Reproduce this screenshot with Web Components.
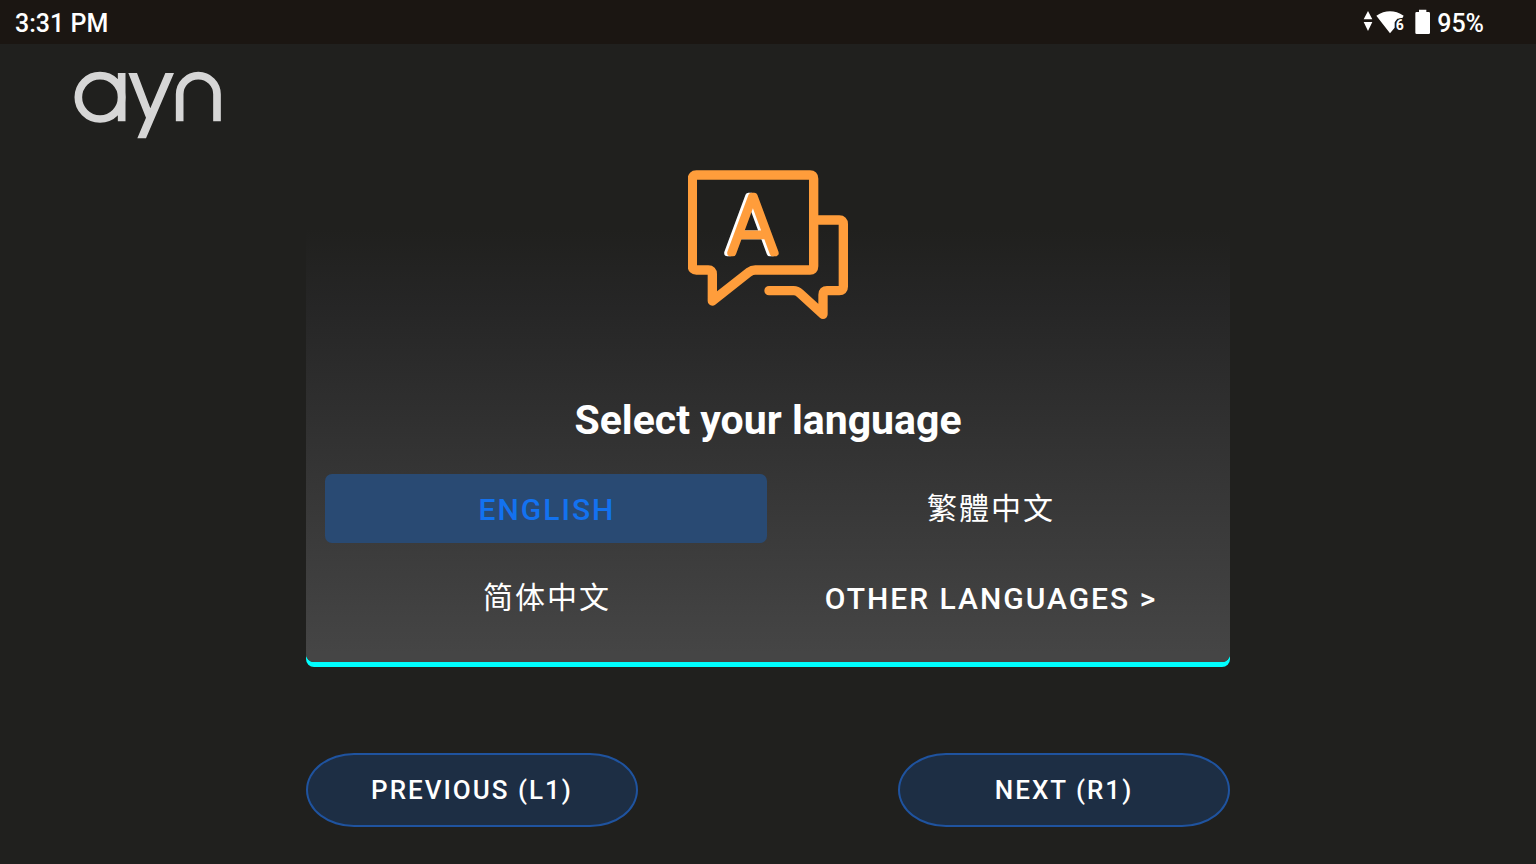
<!DOCTYPE html>
<html lang="en">
<head>
<meta charset="utf-8">
<meta name="viewport" content="width=device-width, initial-scale=1">
<title>Select your language</title>
<style>
  html { background: #20201e; }
  body { margin: 0; color: #fff; font-family: Roboto, "Noto Sans CJK SC", sans-serif; }
</style>
</head>
<body>
<setup-screen>
  <status-bar slot="status" time="3:31 PM" battery="95%"></status-bar>
  <brand-logo slot="brand"></brand-logo>
  <language-panel heading="Select your language">
    <language-option selected>ENGLISH</language-option>
    <language-option lang="zh-Hant">繁體中文</language-option>
    <language-option lang="zh-Hans">简体中文</language-option>
    <language-option>OTHER LANGUAGES &gt;</language-option>
  </language-panel>
  <nav-button slot="nav">PREVIOUS (L1)</nav-button>
  <nav-button slot="nav">NEXT (R1)</nav-button>
</setup-screen>

<script>
class BaseElement extends HTMLElement {
  constructor() {
    super();
    this.attachShadow({ mode: "open" });
  }
  connectedCallback() {
    this.shadowRoot.innerHTML = this.render();
  }
}

customElements.define("setup-screen", class extends BaseElement {
  render() {
    return `
      <style>
        :host { display: flex; flex-direction: column; min-height: 100vh; box-sizing: border-box; }
        header { padding: 27px 74px 0; }
        main { width: 100%; max-width: 924px; margin: 31px auto 0; }
        nav { display: flex; justify-content: space-between; gap: 24px; margin: 91px 0 36px; }
      </style>
      <slot name="status"></slot>
      <header><slot name="brand"></slot></header>
      <main>
        <slot></slot>
        <nav aria-label="Setup steps"><slot name="nav"></slot></nav>
      </main>`;
  }
});

customElements.define("status-bar", class extends BaseElement {
  render() {
    return `
      <style>
        :host { display: flex; align-items: center; justify-content: space-between; height: 44px;
          padding: 4px 52px 0 15px; box-sizing: border-box; background: #1b1612;
          font-size: 25px; font-weight: 500; line-height: 30px; }
        .icons { display: flex; align-items: center; gap: 6px; }
        svg { display: block; width: 68px; height: 26px; margin-bottom: 4px; }
        .gen { font: bold 42px Roboto, sans-serif; stroke: #1b1612; stroke-width: 6px; paint-order: stroke; }
      </style>
      <span>${this.getAttribute("time")}</span>
      <div class="icons">
        <svg viewBox="39 26 204 78" fill="#fff" aria-hidden="true">
          <path d="M54 32L67 57H41ZM41 65H67L54 92Z"/>
          <path d="M79 46Q120 20 161 46L156 55H142L134 66V82L120 99Z"/>
          <text class="gen" x="137" y="90">6</text>
          <path d="M207 28H229V35H236Q240 35 240 39V97Q240 101 236 101H200Q196 101 196 97V39Q196 35 200 35H207Z"/>
        </svg>
        <span>${this.getAttribute("battery")}</span>
      </div>`;
  }
});

customElements.define("brand-logo", class extends BaseElement {
  render() {
    return `
      <style>
        :host { display: block; }
        svg { display: block; width: 148px; height: 68px; }
      </style>
      <svg viewBox="222 213 444 204" role="img" aria-label="ayn">
        <g fill="none" stroke="#d6d6d6" stroke-width="23">
          <circle cx="300" cy="292" r="65"/>
          <path d="M365 219V364M539 364V283A56 56 0 0 1 651 283V364"/>
        </g>
        <path fill="#d6d6d6" d="M496 219H522L438 415H412L438 353L385 219H411L451 325Z"/>
      </svg>`;
  }
});

customElements.define("language-icon", class extends BaseElement {
  render() {
    return `
      <style>
        :host { display: block; }
        svg { display: block; width: 160px; height: 150px; }
        text { font: 100 238px Roboto, sans-serif; text-anchor: middle;
          fill: #ff9d3b; stroke: #ff9d3b; stroke-width: 20px; stroke-linejoin: round;
          filter: drop-shadow(-9px 0 0 #fff); }
      </style>
      <svg viewBox="54 45 480 450" aria-hidden="true">
        <g fill="none" stroke="#ff9d3b" stroke-width="28" stroke-linecap="round" stroke-linejoin="round">
          <path d="M127 438L236 352Q246 345 256 345H420Q431 345 431 334V71Q431 60 420 60H79Q67 60 67 72V333Q67 345 79 345H115Q127 345 127 357Z"/>
          <path d="M445 195H508Q520 195 520 207V395Q520 407 508 407H471Q459 407 459 419V478L390 415Q381 407 371 407H297"/>
        </g>
        <text x="249" y="294">A</text>
      </svg>`;
  }
});

customElements.define("language-panel", class extends BaseElement {
  render() {
    return `
      <style>
        :host { display: block; }
        section { display: flex; flex-direction: column; align-items: center; padding: 0 19px 30px;
          border-radius: 0 0 8px 8px; box-shadow: 0 5px #00ffff;
          background: linear-gradient(#20201e 12%, #262626 28%, #454545 98%); }
        h1 { margin: 76px 0 30px; font-size: 41px; line-height: 48px; font-weight: 700; text-align: center; }
        .options { display: grid; grid-template-columns: 1fr 1fr; gap: 20px 2px; align-self: stretch; }
      </style>
      <section aria-labelledby="heading">
        <language-icon></language-icon>
        <h1 id="heading">${this.getAttribute("heading")}</h1>
        <div class="options"><slot></slot></div>
      </section>`;
  }
});

customElements.define("language-option", class extends BaseElement {
  render() {
    return `
      <style>
        :host { display: block; }
        button { display: block; width: 100%; height: 69px; padding: 2px 0 0 2px; border: 0; border-radius: 7px;
          background: none; color: #fff; cursor: pointer;
          font: 500 30px/34px Roboto, "Noto Sans CJK SC", sans-serif; letter-spacing: 2px; }
        :host(:lang(zh)) button { font-weight: 400; padding-top: 0; }
        :host(:lang(zh-Hant)) button { font-family: Roboto, "Noto Sans CJK TC", sans-serif; }
        button[aria-pressed="true"] { background: #294a73; color: #1372f0; }
      </style>
      <button type="button" aria-pressed="${this.hasAttribute("selected")}"><slot></slot></button>`;
  }
});

customElements.define("nav-button", class extends BaseElement {
  render() {
    return `
      <style>
        :host { display: block; flex: 0 1 332px; }
        button { display: block; width: 100%; height: 74px; padding: 0; box-sizing: border-box;
          border: 2px solid #1f539f; border-radius: 48px / 50%; background: #1d2e44; color: #fff;
          font: 500 26px/32px Roboto, sans-serif; letter-spacing: 2px; cursor: pointer; }
      </style>
      <button type="button"><slot></slot></button>`;
  }
});
</script>
</body>
</html>
